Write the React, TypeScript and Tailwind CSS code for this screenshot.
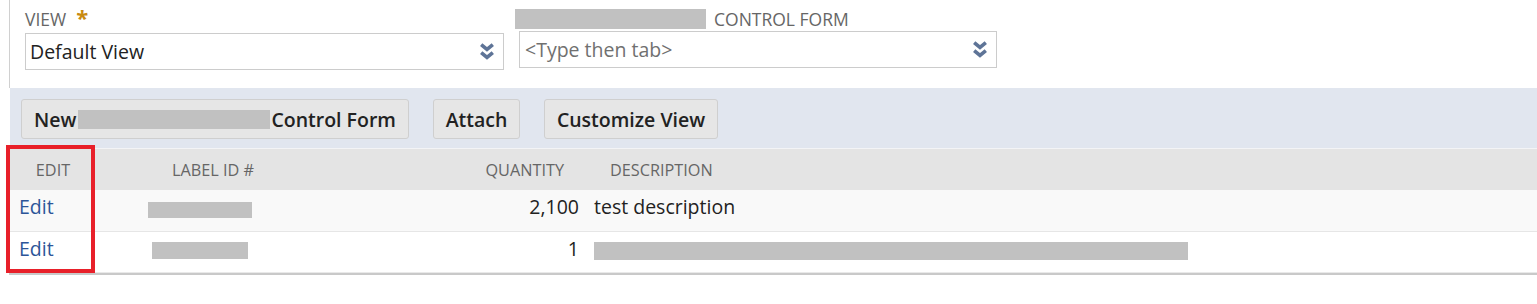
import React from "react";

function Chevrons() {
  return (
    <svg width="16" height="19" viewBox="0 0 16 19" className="shrink-0">
      <path d="M2.2 2.6 L8 7.4 L13.8 2.6" stroke="#5e7497" strokeWidth="3.6" fill="none" strokeLinejoin="miter" />
      <path d="M2.2 10.6 L8 15.4 L13.8 10.6" stroke="#5e7497" strokeWidth="3.6" fill="none" strokeLinejoin="miter" />
    </svg>
  );
}

function Redact({ w, h, className = "" }: { w: string; h: string; className?: string }) {
  return <span className={`inline-block bg-[#c1c1c1] ${w} ${h} ${className}`} />;
}

export default function App() {
  return (
    <div className="relative w-[1537px] h-[304px] bg-white font-['Open_Sans',sans-serif] text-[#222]">
      {/* form fields */}
      <div className="ml-[9px] h-[88px] border-l border-[#d0d0d0] pl-[15px] pt-[9px] flex">
        <div className="w-[479px] flex flex-col">
          <div className="flex items-start h-[20px] text-[17.5px] leading-[20px] text-[#666] uppercase">
            <span>View</span>
            <span className="ml-[10px] text-[22px] leading-[16px] font-bold text-[#c88a12]">*</span>
          </div>
          <div className="mt-[4px] h-[37px] border border-[#cccccc] flex items-center pl-[4px] pr-[8px]">
            <span className="flex-1 text-[19.5px] leading-[24px] text-[#222]">Default View</span>
            <Chevrons />
          </div>
        </div>
        <div className="ml-[11px] flex flex-col">
          <div className="flex items-center h-[20px] text-[17.5px] leading-[20px] text-[#666] uppercase">
            <Redact w="w-[191px]" h="h-[20px]" />
            <span className="ml-[8px]">Control Form</span>
          </div>
          <div className="ml-[4px] mt-[2px] w-[478px] h-[37px] border border-[#cccccc] flex items-center pl-[5px] pr-[8px]">
            <span className="flex-1 text-[19.5px] leading-[24px] text-[#707070]">&lt;Type then tab&gt;</span>
            <Chevrons />
          </div>
        </div>
      </div>

      {/* button band */}
      <div className="ml-[10px] h-[60px] bg-[#e1e6ef] flex items-start pt-[11px] pl-[11px] gap-[24px]">
        <button className="h-[40px] w-[388px] rounded-[3px] border border-[#cfcfcf] bg-[#e6e6e6] flex items-center pl-[12px] pt-[1px] text-[19.5px] font-semibold text-[#222] leading-[24px]">
          <span>New</span>
          <Redact w="w-[192px]" h="h-[19px]" className="ml-[2px]" />
          <span className="ml-[1px]">Control Form</span>
        </button>
        <button className="h-[40px] w-[87px] rounded-[3px] border border-[#cfcfcf] bg-[#e6e6e6] flex items-center justify-center pt-[1px] text-[19.5px] font-semibold text-[#222] leading-[24px]">
          Attach
        </button>
        <button className="h-[40px] w-[174px] rounded-[3px] border border-[#cfcfcf] bg-[#e6e6e6] flex items-center justify-center pt-[1px] text-[19.5px] font-semibold text-[#222] leading-[24px]">
          Customize View
        </button>
      </div>
      <div className="ml-[10px] h-[1px] bg-[#f3f4f6]" />

      {/* table */}
      <div className="ml-[10px]">
        <div className="h-[41px] bg-[#e4e4e4] flex items-center text-[16.25px] leading-[20px] text-[#666] uppercase">
          <div className="w-[85px] text-center pl-[1px]">Edit</div>
          <div className="w-[375px] pl-[77px]">Label ID #</div>
          <div className="w-[116px] text-right pr-[22px]">Quantity</div>
          <div className="pl-[24px]">Description</div>
        </div>
        <div className="h-[42px] bg-[#f9f9f9] border-b border-[#e6e6e6] flex items-start pt-[5px] text-[19.5px] leading-[24px]">
          <div className="w-[85px] pl-[9px] text-[#2c5598]">Edit</div>
          <div className="w-[375px] pl-[53px] pt-[4px]"><Redact w="w-[104px]" h="h-[16px]" className="block" /></div>
          <div className="w-[116px] text-right pr-[7px] text-[#222]">2,100</div>
          <div className="pl-[8px] text-[#222]">test description</div>
        </div>
        <div className="h-[41px] bg-white border-b border-[#e9e9e9] flex items-start pt-[5px] text-[19.5px] leading-[24px]">
          <div className="w-[85px] pl-[9px] text-[#2c5598]">Edit</div>
          <div className="w-[375px] pl-[57px] pt-[3px]"><Redact w="w-[96px]" h="h-[17px]" className="block" /></div>
          <div className="w-[116px] text-right pr-[7px] text-[#222]">1</div>
          <div className="pl-[8px] pt-[4px]"><Redact w="w-[594px]" h="h-[18px]" className="block" /></div>
        </div>
      </div>
      <div className="ml-[9px] h-[2px] bg-[#c9c9c9]" />

      {/* annotation */}
      <div className="absolute left-[6px] top-[145px] w-[89px] h-[128px] border-[4px] border-[#e8202a]" />
    </div>
  );
}
